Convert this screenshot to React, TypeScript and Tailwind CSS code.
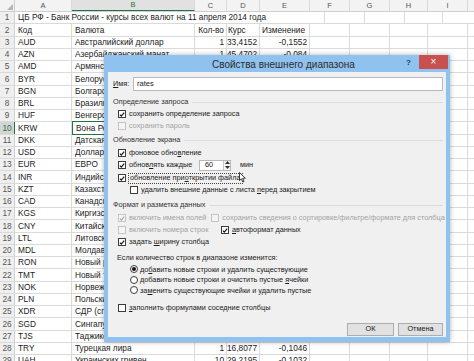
import React from 'react';

const cols = ['A', 'B', 'C', 'D', 'E', 'F', 'G', 'H', 'I', 'J'];
const widths = ['w-[57px]', 'w-[123px]', 'w-[32px]', 'w-[33px]', 'w-[50px]', 'w-[40px]', 'w-[40px]', 'w-[38px]', 'w-[40px]', 'w-[40px]'];

const rows = [
  ['AUD', 'Австралийский доллар', '1', '33,4152', '-0,1552'],
  ['AZN', 'Азербайджанский манат', '1', '45,4702', '-0,084'],
  ['AMD', 'Армянских драмов', '1000', '88,1255', '-0,2134'],
  ['BYR', 'Белорусских рублей', '10000', '35,4591', '-0,1345'],
  ['BGN', 'Болгарский лев', '1', '25,1278', '-0,0441'],
  ['BRL', 'Бразильский реал', '1', '15,8821', '-0,0211'],
  ['HUF', 'Венгерских форинтов', '100', '15,9733', '-0,0124'],
  ['KRW', 'Вона Республики Корея', '1000', '33,9806', '-0,1215'],
  ['DKK', 'Датская крона', '10', '65,8634', '-0,1141'],
  ['USD', 'Доллар США', '1', '35,5966', '-0,2224'],
  ['EUR', 'ЕВРО', '1', '49,1445', '-0,0907'],
  ['INR', 'Индийских рупий', '100', '59,2633', '-0,4151'],
  ['KZT', 'Казахстанских тенге', '100', '19,5283', '-0,1216'],
  ['CAD', 'Канадский доллар', '1', '32,4915', '-0,1394'],
  ['KGS', 'Киргизских сомов', '100', '64,7627', '-0,4062'],
  ['CNY', 'Китайских юаней', '10', '57,3268', '-0,2905'],
  ['LTL', 'Литовский лит', '1', '14,2355', '-0,0264'],
  ['MDL', 'Молдавских леев', '10', '26,1085', '-0,1797'],
  ['RON', 'Новый румынский лей', '1', '10,9902', '-0,0094'],
  ['TMT', 'Новый туркменский манат', '1', '12,4893', '-0,078'],
  ['NOK', 'Норвежских крон', '10', '60,0147', '-0,1547'],
  ['PLN', 'Польский злотый', '1', '11,8059', '-0,0293'],
  ['XDR', 'СДР (специальные права заимствования)', '1', '55,2084', '-0,2468'],
  ['SGD', 'Сингапурский доллар', '1', '28,4694', '-0,1407'],
  ['TJS', 'Таджикских сомони', '10', '72,9722', '-0,4549'],
  ['TRY', 'Турецкая лира', '1', '16,8077', '-0,1046'],
  ['UAH', 'Украинских гривен', '10', '29,2195', '-0,1032'],
];

const Check = ({ on, disabled }: { on?: boolean; disabled?: boolean }) => (
  <span
    className={`w-[8px] h-[8px] shrink-0 border flex items-center justify-center ${
      disabled ? 'border-[#c4c4c4] bg-[#f4f4f4]' : 'border-[#3c3c3c] bg-white'
    }`}
  >
    {on && (
      <svg width="7" height="7" viewBox="0 0 8 8">
        <path d="M1.2 4.2 L3.1 6.1 L6.9 1.6" fill="none" stroke={disabled ? '#a8a8a8' : '#111'} strokeWidth="1.5" />
      </svg>
    )}
  </span>
);

const Radio = ({ on }: { on?: boolean }) => (
  <span className="w-[8px] h-[8px] shrink-0 rounded-full border border-[#3c3c3c] bg-white flex items-center justify-center">
    {on && <span className="w-[4px] h-[4px] rounded-full bg-[#111]" />}
  </span>
);

const Heading = ({ children }: { children: React.ReactNode }) => (
  <div className="h-[12px] flex items-center gap-[4px] text-[#333]">
    <span>{children}</span>
    <span className="flex-1 h-px bg-[#d9dde0]" />
  </div>
);

const Item = ({
  on,
  disabled,
  indent,
  children,
}: {
  on?: boolean;
  disabled?: boolean;
  indent?: boolean;
  children: React.ReactNode;
}) => (
  <div className={`h-[12px] flex items-center gap-[3px] ${indent ? 'pl-[17px]' : 'pl-[5px]'} ${disabled ? 'text-[#a3a3a3]' : 'text-[#1a1a1a]'}`}>
    <Check on={on} disabled={disabled} />
    <span className="whitespace-nowrap">{children}</span>
  </div>
);

const RadioItem = ({ on, children }: { on?: boolean; children: React.ReactNode }) => (
  <div className="h-[10.5px] flex items-center gap-[2px] pl-[17px] text-[#1a1a1a]">
    <Radio on={on} />
    <span className="whitespace-nowrap">{children}</span>
  </div>
);

const Dialog = () => (
  <div className="absolute left-[104px] top-[55px] w-[346px] h-[287px] bg-[#8fc2ee] px-[4px] pb-[5px] flex flex-col shadow-[0_0_5px_rgba(0,0,0,0.3)]">
    {/* title bar */}
    <div className="h-[17px] flex items-start">
      <div className="flex-1 pl-[104px] pt-[3px] text-[10px] leading-[13px] text-[#2c2c2c] whitespace-nowrap">
        Свойства внешнего диапазона
      </div>
      <div className="pt-[3px] pr-[8px] text-[8px] font-bold leading-[10px] text-[#1b3c5e]">?</div>
      <div className="w-[29px] h-[14px] mr-[-2px] bg-[#c9504f] flex items-center justify-center text-white text-[10px] leading-none">
        ×
      </div>
    </div>

    {/* body */}
    <div className="flex-1 bg-[#f0f0f0] pl-[5px] pr-[3px] pt-[5px] text-[7.3px] leading-none relative">
      <div className="h-[14px] flex items-center text-[#1a1a1a]">
        <span className="w-[20px]">
          <u>И</u>мя:
        </span>
        <div className="flex-1 h-full bg-white border border-[#b5b8bd] flex items-center pl-[3px] text-[7.6px]">rates</div>
      </div>

      <div className="mt-[5px]">
        <Heading>Определение запроса</Heading>
      </div>
      <Item on>сохранить определение запроса</Item>
      <Item disabled>сохранить пароль</Item>

      <div className="mt-[2px]">
        <Heading>Обновление экрана</Heading>
      </div>
      <div className="mt-[1px]">
        <Item on>
          фоновое обно<u>в</u>ление
        </Item>
      </div>
      <div className="h-[12px] flex items-center gap-[3px] pl-[5px] text-[#1a1a1a]">
        <Check on />
        <span className="w-[67px] whitespace-nowrap">
          обнов<u>л</u>ять каждые
        </span>
        <div className="w-[32px] h-[11px] bg-white border border-[#b5b8bd] flex">
          <span className="flex-1 flex items-center pl-[5px]">60</span>
          <span className="w-[7px] border-l border-[#c8c8c8] flex flex-col items-center justify-around bg-[#f4f4f4]">
            <svg width="5" height="3" viewBox="0 0 5 3">
              <path d="M0 3 L2.5 0 L5 3 Z" fill="#333" />
            </svg>
            <svg width="5" height="3" viewBox="0 0 5 3">
              <path d="M0 0 L2.5 3 L5 0 Z" fill="#333" />
            </svg>
          </span>
        </div>
        <span className="ml-[6px]">мин</span>
      </div>
      <div className="mt-[1px] h-[12px] flex items-center gap-[2px] pl-[5px] text-[#1a1a1a]">
        <Check on />
        <span className="whitespace-nowrap border border-dotted border-[#444] px-[1px] h-[11px] flex items-center">
          обновление при <u>о</u>ткрытии файла
        </span>
      </div>
      <Item indent>
        удалить внешние данные с листа <u>п</u>еред закрытием
      </Item>

      <div className="mt-[3px]">
        <Heading>Формат и разметка данных</Heading>
      </div>
      <div className="mt-[1px] flex">
        <div className="w-[103px]">
          <Item on disabled>
            включить имена полей
          </Item>
        </div>
        <Item disabled>сохранить сведения о сортировке/фильтре/формате для столбца</Item>
      </div>
      <div className="flex">
        <div className="w-[103px]">
          <Item disabled>включить номера строк</Item>
        </div>
        <Item on>
          <u>а</u>втоформат данных
        </Item>
      </div>
      <Item on>
        задать <u>ш</u>ирину столбца
      </Item>

      <div className="mt-[4px] h-[12px] flex items-center pl-[4px] text-[#1a1a1a] whitespace-nowrap">
        Если количество строк в диапазоне изменится:
      </div>
      <RadioItem on>
        до<u>б</u>авить новые строки и удалить существующие
      </RadioItem>
      <RadioItem>
        добавить новые строки и очистить пустые <u>я</u>чейки
      </RadioItem>
      <RadioItem>
        за<u>м</u>енить существующие ячейки и удалить пустые
      </RadioItem>

      <div className="mt-[6px]">
        <Item>
          <u>з</u>аполнить формулами соседние столбцы
        </Item>
      </div>

      <div className="mt-[9px] flex justify-end gap-[4px]">
        <button className="w-[47px] h-[13px] bg-[#e1e1e1] border border-[#adadad] text-[7.3px] text-[#1a1a1a] flex items-center justify-center">
          ОК
        </button>
        <button className="w-[45px] h-[13px] bg-[#e1e1e1] border border-[#adadad] text-[7.3px] text-[#1a1a1a] flex items-center justify-center">
          Отмена
        </button>
      </div>

      {/* mouse pointer */}
      <svg className="absolute left-[131px] top-[100px]" width="7" height="11" viewBox="0 0 7 11">
        <path d="M0.5 0.5 L0.5 8.5 L2.4 6.8 L3.8 10 L5 9.4 L3.7 6.3 L6.3 6.3 Z" fill="#fff" stroke="#111" strokeWidth="0.8" />
      </svg>
    </div>
  </div>
);

const App = () => {
  return (
    <div className="relative w-[474px] h-[361px] overflow-hidden bg-white font-['Liberation_Sans',Arial,sans-serif] text-[8.3px] leading-none text-[#222]">
      {/* column headers */}
      <div className="flex h-[12px] bg-[#f3f3f3] border-b border-[#cfcfcf]">
        <div className="w-[15px] shrink-0 border-r border-[#cfcfcf] relative">
          <svg className="absolute right-[1px] bottom-[1px]" width="6" height="6" viewBox="0 0 6 6">
            <path d="M6 0 L6 6 L0 6 Z" fill="#b4b4b4" />
          </svg>
        </div>
        {cols.map((c, i) => (
          <div
            key={c}
            className={`${widths[i]} shrink-0 border-r border-[#dadada] flex items-center justify-center text-[7.5px] ${
              c === 'B' ? 'bg-[#e1e1e1] text-[#217346] border-b-[1.5px] border-b-[#217346]' : 'text-[#555]'
            }`}
          >
            {c}
          </div>
        ))}
      </div>

      {/* row 1 */}
      <div className="flex h-[12.25px] border-b border-[#dadada]">
        <div className="w-[15px] shrink-0 bg-[#efefef] border-r border-[#cfcfcf] flex items-center justify-center text-[#555]">1</div>
        <div className="w-[195px] shrink-0 flex items-center pl-[3px] whitespace-nowrap">
          ЦБ РФ - Банк России - курсы всех валют на 11 апреля 2014 года
        </div>
        <div className="w-[65px] shrink-0" />
        <div className="w-[50px] shrink-0 border-r border-[#dadada]" />
        {widths.slice(5).map((w, i) => (
          <div key={i} className={`${w} shrink-0 border-r border-[#dadada]`} />
        ))}
      </div>

      {/* row 2 */}
      <div className="flex h-[12.25px] border-b border-[#dadada]">
        <div className="w-[15px] shrink-0 bg-[#efefef] border-r border-[#cfcfcf] flex items-center justify-center text-[#555]">2</div>
        <div className="w-[57px] shrink-0 border-r border-[#dadada] flex items-center pl-[3px]">Код</div>
        <div className="w-[123px] shrink-0 border-r border-[#dadada] flex items-center pl-[3px]">Валюта</div>
        <div className="w-[32px] shrink-0 border-r border-[#dadada] flex items-center justify-end pr-[2px] whitespace-nowrap">Кол-во</div>
        <div className="w-[33px] shrink-0 border-r border-[#dadada] flex items-center pl-[1px]">Курс</div>
        <div className="w-[50px] shrink-0 border-r border-[#dadada] flex items-center pl-[2px]">Изменение</div>
        {widths.slice(5).map((w, i) => (
          <div key={i} className={`${w} shrink-0 border-r border-[#dadada]`} />
        ))}
      </div>

      {/* data rows */}
      {rows.map((r, idx) => {
        const n = idx + 3;
        const sel = n === 10;
        return (
          <div key={n} className="flex h-[12.25px] border-b border-[#dadada]">
            <div
              className={`w-[15px] shrink-0 border-r flex items-center justify-center ${
                sel ? 'bg-[#d4d4d4] text-[#217346] border-[#217346]' : 'bg-[#efefef] text-[#555] border-[#cfcfcf]'
              }`}
            >
              {n}
            </div>
            <div className="w-[57px] shrink-0 border-r border-[#dadada] flex items-center pl-[3px]">{r[0]}</div>
            <div
              className={`w-[123px] shrink-0 flex items-center pl-[3px] overflow-hidden whitespace-nowrap ${
                sel ? 'border border-[#217346] mt-[-1px] h-[13.25px]' : 'border-r border-[#dadada]'
              }`}
            >
              {r[1]}
            </div>
            <div className="w-[32px] shrink-0 border-r border-[#dadada] flex items-center justify-end pr-[2px]">{r[2]}</div>
            <div className="w-[33px] shrink-0 border-r border-[#dadada] flex items-center justify-end pr-[2px]">{r[3]}</div>
            <div className="w-[50px] shrink-0 border-r border-[#dadada] flex items-center justify-end pr-[2px]">{r[4]}</div>
            {widths.slice(5).map((w, i) => (
              <div key={i} className={`${w} shrink-0 border-r border-[#dadada]`} />
            ))}
          </div>
        );
      })}

      <Dialog />
    </div>
  );
};

export default App;
